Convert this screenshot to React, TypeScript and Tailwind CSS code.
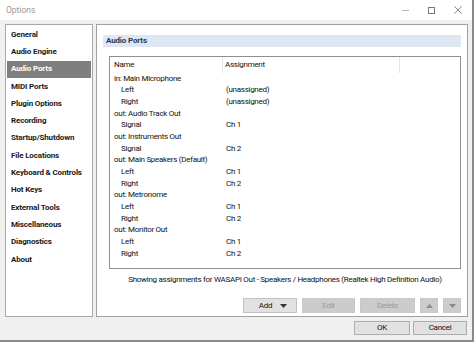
const PAGES = [
  "General",
  "Audio Engine",
  "Audio Ports",
  "MIDI Ports",
  "Plugin Options",
  "Recording",
  "Startup/Shutdown",
  "File Locations",
  "Keyboard & Controls",
  "Hot Keys",
  "External Tools",
  "Miscellaneous",
  "Diagnostics",
  "About",
];

interface Row {
  name: string;
  assignment?: string;
  child?: boolean;
}

const ROWS: Row[] = [
  { name: "in: Main Microphone" },
  { name: "Left", assignment: "(unassigned)", child: true },
  { name: "Right", assignment: "(unassigned)", child: true },
  { name: "out: Audio Track Out" },
  { name: "Signal", assignment: "Ch 1", child: true },
  { name: "out: Instruments Out" },
  { name: "Signal", assignment: "Ch 2", child: true },
  { name: "out: Main Speakers (Default)" },
  { name: "Left", assignment: "Ch 1", child: true },
  { name: "Right", assignment: "Ch 2", child: true },
  { name: "out: Metronome" },
  { name: "Left", assignment: "Ch 1", child: true },
  { name: "Right", assignment: "Ch 2", child: true },
  { name: "out: Monitor Out" },
  { name: "Left", assignment: "Ch 1", child: true },
  { name: "Right", assignment: "Ch 2", child: true },
];

function Caret({ up = false, color = "#333" }: { up?: boolean; color?: string }) {
  return (
    <svg width="7" height="4" viewBox="0 0 7 4">
      <path d={up ? "M0 4 L3.5 0 L7 4 Z" : "M0 0 L7 0 L3.5 4 Z"} fill={color} />
    </svg>
  );
}

export default function App() {
  return (
    <div
      className="w-[474px] h-[342px] bg-[#f0f0f0] flex flex-col overflow-hidden border-b-2 border-r-2 border-[#8a8a8a] text-[#111] whitespace-nowrap tracking-[-0.28px]"
      style={{ fontFamily: 'Roboto, Lato, sans-serif' }}
    >
      {/* title bar */}
      <div className="h-[20px] bg-white flex items-center justify-between shrink-0">
        <span className="pl-[6px] text-[8.5px] text-[#9a9a9a] tracking-normal">Options</span>
        <div className="flex items-center pr-[10px] gap-[19px]">
          <svg width="7" height="7" viewBox="0 0 7 7">
            <path d="M0 3.5 H7" stroke="#b5b5b5" strokeWidth="1" />
          </svg>
          <svg width="7" height="7" viewBox="0 0 7 7">
            <rect x="0.5" y="0.5" width="6" height="6" fill="none" stroke="#777" strokeWidth="1" />
          </svg>
          <svg width="8" height="8" viewBox="0 0 8 8">
            <path d="M0.5 0.5 L7.5 7.5 M7.5 0.5 L0.5 7.5" stroke="#777" strokeWidth="0.9" />
          </svg>
        </div>
      </div>

      {/* body */}
      <div className="flex mt-[4px] pl-[5px] pr-[4px] gap-[3px] h-[293px] shrink-0">
        <div className="w-[88px] bg-white border border-[#a8a8a8] pt-[1px] px-[1px] tracking-[-0.15px]">
          {PAGES.map((p) => (
            <div
              key={p}
              className={`h-[17.3px] flex items-center pl-[4px] text-[8px] font-bold leading-none ${
                p === "Audio Ports" ? "bg-[#7f7f7f] text-white" : "text-[#1a1a1a]"
              }`}
            >
              {p}
            </div>
          ))}
        </div>

        <div className="flex-1 bg-white border border-[#a0a0a0] pt-[10px] pl-[6px] pr-[6px] flex flex-col">
          <div className="h-[12px] bg-[#dde7f1] flex items-center pl-[3px] text-[8px] font-bold text-[#1e3a5c] leading-none tracking-[-0.15px]">
            Audio Ports
          </div>

          <div className="ml-[6px] mt-[9px] h-[213px] border border-[#8f8f8f] bg-white flex flex-col">
            <div className="h-[16px] flex text-[8px] leading-none">
              <div className="w-[113px] pl-[4px] flex items-center border-r border-[#e4e4e4]">Name</div>
              <div className="w-[177px] pl-[2px] flex items-center border-r border-[#e4e4e4]">Assignment</div>
            </div>
            <div className="flex flex-col">
              {ROWS.map((r, i) => (
                <div key={i} className="h-[11.67px] flex items-center text-[8px] leading-none">
                  <div className={`w-[113px] ${r.child ? "pl-[11px]" : "pl-[4px]"}`}>{r.name}</div>
                  <div className="pl-[3px]">{r.assignment ?? ""}</div>
                </div>
              ))}
            </div>
          </div>

          <div className="ml-[6px] mt-[4px] h-[14px] flex items-center justify-center text-[8px] leading-none">
            Showing assignments for WASAPI Out - Speakers / Headphones (Realtek High Definition Audio)
          </div>

          <div className="mt-[11px] flex justify-end gap-[5px] text-[8px] leading-none">
            <button className="w-[54px] h-[15px] bg-[#e1e1e1] border border-[#c2c2c2] flex items-center justify-center gap-[8px] pl-[6px]">
              <span>Add</span>
              <Caret />
            </button>
            <button className="w-[53px] h-[15px] bg-[#cccccc] border border-[#c8c8c8] text-[#9a9a9a] flex items-center justify-center">
              Edit
            </button>
            <button className="w-[55px] h-[15px] bg-[#cccccc] border border-[#c8c8c8] text-[#9a9a9a] flex items-center justify-center">
              Delete
            </button>
            <button className="w-[18px] h-[15px] bg-[#cccccc] border border-[#c8c8c8] flex items-center justify-center">
              <Caret up color="#8a8a8a" />
            </button>
            <button className="w-[18px] h-[15px] bg-[#cccccc] border border-[#c8c8c8] flex items-center justify-center">
              <Caret color="#8a8a8a" />
            </button>
          </div>
        </div>
      </div>

      {/* footer */}
      <div className="flex justify-end gap-[3px] pr-[5px] mt-[4px] text-[8px] leading-none">
        <button className="w-[56px] h-[14px] bg-[#e1e1e1] border border-[#adadad] flex items-center justify-center">
          OK
        </button>
        <button className="w-[54px] h-[14px] bg-[#e1e1e1] border border-[#adadad] flex items-center justify-center">
          Cancel
        </button>
      </div>
    </div>
  );
}
